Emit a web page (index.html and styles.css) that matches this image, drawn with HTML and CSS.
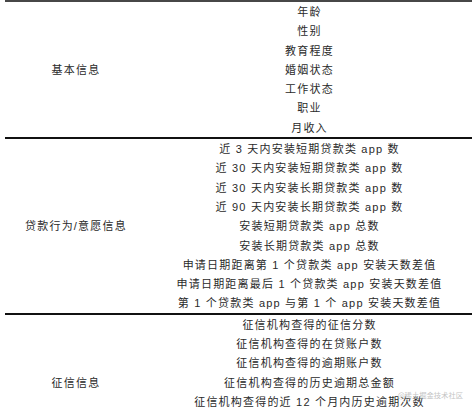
FILE: index.html
```html
<!DOCTYPE html>
<html lang="zh">
<head>
<meta charset="utf-8">
<title>特征表</title>
<link rel="stylesheet" href="styles.css">
</head>
<body>
<div class="page">
  <table class="features">
    <tbody class="section">
      <tr><td class="group" rowspan="7">基本信息</td><td class="item">年龄</td></tr>
      <tr><td class="item">性别</td></tr>
      <tr><td class="item">教育程度</td></tr>
      <tr><td class="item">婚姻状态</td></tr>
      <tr><td class="item">工作状态</td></tr>
      <tr><td class="item">职业</td></tr>
      <tr><td class="item">月收入</td></tr>
    </tbody>
    <tbody class="section">
      <tr><td class="group" rowspan="9">贷款行为/意愿信息</td><td class="item">近 3 天内安装短期贷款类 app 数</td></tr>
      <tr><td class="item">近 30 天内安装短期贷款类 app 数</td></tr>
      <tr><td class="item">近 30 天内安装长期贷款类 app 数</td></tr>
      <tr><td class="item">近 90 天内安装长期贷款类 app 数</td></tr>
      <tr><td class="item">安装短期贷款类 app 总数</td></tr>
      <tr><td class="item">安装长期贷款类 app 总数</td></tr>
      <tr><td class="item">申请日期距离第 1 个贷款类 app 安装天数差值</td></tr>
      <tr><td class="item">申请日期距离最后 1 个贷款类 app 安装天数差值</td></tr>
      <tr><td class="item">第 1 个贷款类 app 与第 1 个 app 安装天数差值</td></tr>
    </tbody>
    <tbody class="section">
      <tr><td class="group group-row4" rowspan="5">征信信息</td><td class="item">征信机构查得的征信分数</td></tr>
      <tr><td class="item">征信机构查得的在贷账户数</td></tr>
      <tr><td class="item">征信机构查得的逾期账户数</td></tr>
      <tr><td class="item">征信机构查得的历史逾期总金额</td></tr>
      <tr><td class="item">征信机构查得的近 12 个月内历史逾期次数</td></tr>
    </tbody>
  </table>
  <div class="watermark">@稀土掘金技术社区</div>
</div>
</body>
</html>
```

FILE: styles.css
```css
html, body {
  margin: 0;
  padding: 0;
  background: #ffffff;
  overflow: hidden;
}

.page {
  position: relative;
  width: 474px;
  height: 413px;
  overflow: hidden;
  font-family: "Liberation Sans", "Noto Sans CJK SC", sans-serif;
  font-size: 11px;
  color: #2a2a2a;
}

.features {
  margin-left: 5px;
  width: 467px;
  border-collapse: collapse;
  border-spacing: 0;
  border-top: 2px solid #474747;
}

.section + .section {
  border-top: 2px solid #111111;
}

.features td {
  padding: 1px 0 0;
  height: 18.3px;
  line-height: 18.3px;
  text-align: center;
  white-space: nowrap;
  letter-spacing: 1.2px;
}

.group {
  width: 142px;
  vertical-align: middle;
}

.features td.group-row4 {
  vertical-align: top;
  padding-top: 58.9px;
}

.watermark {
  position: absolute;
  right: 11px;
  top: 391px;
  font-family: "Noto Sans CJK SC", sans-serif;
  font-size: 7.3px;
  line-height: 9px;
  color: #c4c4c4;
}
```
